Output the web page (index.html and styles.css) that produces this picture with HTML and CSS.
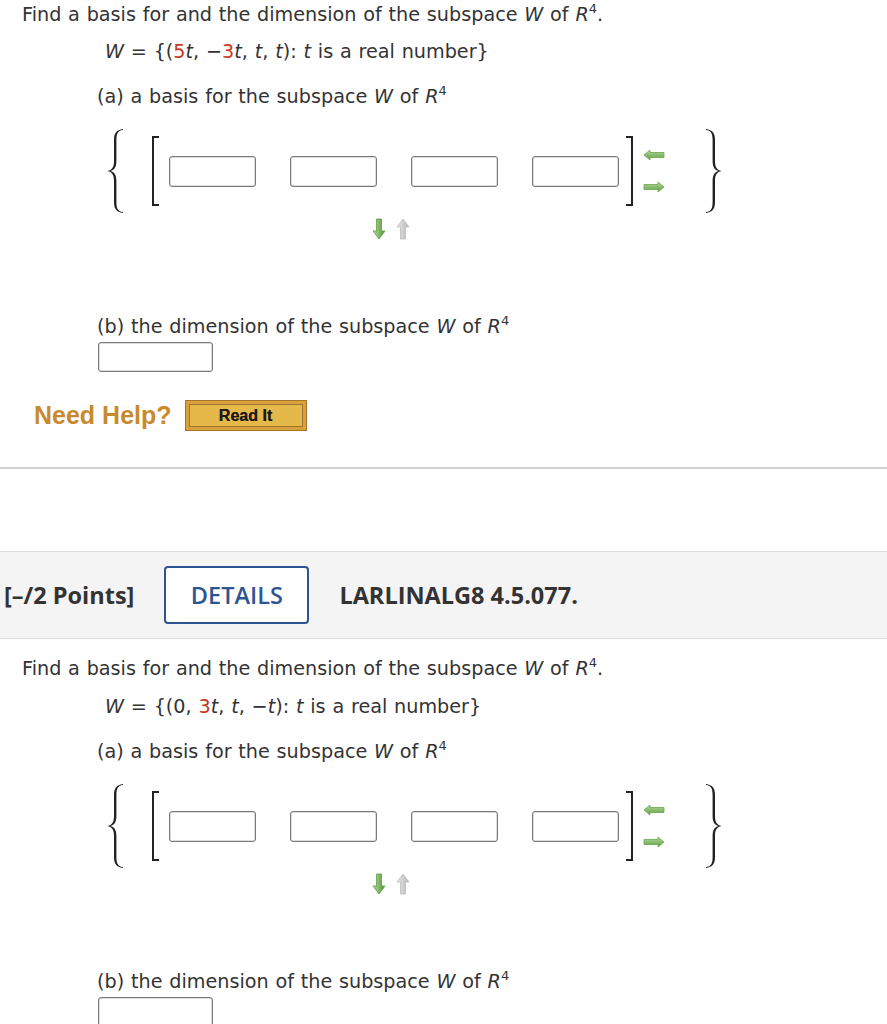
FILE: index.html
```html
<!DOCTYPE html>
<html>
<head>
<meta charset="utf-8">
<link rel="stylesheet" href="styles.css">
</head>
<body>
<section class="q first">
  <p class="prompt">Find a basis for and the dimension of the subspace <i>W</i> of <i>R</i><sup>4</sup>.</p>
  <p class="set"><i>W</i> = {(<span class="red">5</span><i>t</i>, −<span class="red">3</span><i>t</i>, <i>t</i>, <i>t</i>): <i>t</i> is a real number}</p>
  <p class="part">(a) a basis for the subspace <i>W</i> of <i>R</i><sup>4</sup></p>
  <div class="vecrow">
    <svg class="brace" width="20" height="86" viewBox="0 0 20 86"><path d="M17 1 C10.5 2 8 5 8 12 L8 33 C8 39.5 6 42 1.5 43 C6 44 8 46.5 8 53 L8 74 C8 81 10.5 84 17 85 L17 84 C12 83.5 10.4 80.5 10.4 74 L10.4 53 C10.4 47 8.5 44.2 4.5 43 C8.5 41.8 10.4 39 10.4 33 L10.4 12 C10.4 5.5 12 2.5 17 2 Z" fill="#222"/></svg>
    <div class="matrix">
      <span class="bracket left"></span>
      <span class="box"></span>
      <span class="box"></span>
      <span class="box"></span>
      <span class="box"></span>
      <span class="bracket right"></span>
    </div>
    <div class="harrows">
      <svg width="22" height="12" viewBox="0 0 22 12"><defs><linearGradient id="hg1" x1="0" y1="0" x2="0" y2="1"><stop offset="0" stop-color="#b7dba0"/><stop offset="1" stop-color="#5e9f3f"/></linearGradient></defs><path d="M1 6 L7 1 L7 3.5 L21 3.5 L21 8.5 L7 8.5 L7 11 Z" fill="url(#hg1)" stroke="#6aa64c" stroke-width="0.8"/></svg>
      <svg width="22" height="12" viewBox="0 0 22 12"><path d="M21 6 L15 1 L15 3.5 L1 3.5 L1 8.5 L15 8.5 L15 11 Z" fill="url(#hg1)" stroke="#6aa64c" stroke-width="0.8"/></svg>
    </div>
    <svg class="brace rbrace" width="20" height="86" viewBox="0 0 20 86"><path d="M3 1 C9.5 2 12 5 12 12 L12 33 C12 39.5 14 42 18.5 43 C14 44 12 46.5 12 53 L12 74 C12 81 9.5 84 3 85 L3 84 C8 83.5 9.6 80.5 9.6 74 L9.6 53 C9.6 47 11.5 44.2 15.5 43 C11.5 41.8 9.6 39 9.6 33 L9.6 12 C9.6 5.5 8 2.5 3 2 Z" fill="#222"/></svg>
  </div>
  <div class="varrows">
    <svg width="14" height="22" viewBox="0 0 14 22"><defs><linearGradient id="vg1" x1="0" y1="0" x2="1" y2="0"><stop offset="0" stop-color="#b7dba0"/><stop offset="1" stop-color="#4f9232"/></linearGradient><linearGradient id="vg2" x1="0" y1="0" x2="1" y2="0"><stop offset="0" stop-color="#e8e8e8"/><stop offset="1" stop-color="#b5b5b5"/></linearGradient></defs><path d="M4.5 1 L9.5 1 L9.5 13 L13 13 L7 21 L1 13 L4.5 13 Z" fill="url(#vg1)" stroke="#5f9e42" stroke-width="0.8"/></svg>
    <svg width="14" height="22" viewBox="0 0 14 22"><path d="M4.5 21 L9.5 21 L9.5 9 L13 9 L7 1 L1 9 L4.5 9 Z" fill="url(#vg2)" stroke="#bdbdbd" stroke-width="0.8"/></svg>
  </div>
  <p class="part partb">(b) the dimension of the subspace <i>W</i> of <i>R</i><sup>4</sup></p>
  <span class="box dim"></span>
  <div class="help">
    <span class="need">Need Help?</span>
    <span class="readit"><span class="readit-inner">Read It</span></span>
  </div>
</section>
<hr class="rule">
<div class="band">
  <span class="points">[–/2 Points]</span>
  <span class="details">DETAILS</span>
  <span class="code">LARLINALG8 4.5.077.</span>
</div>
<section class="q second">
  <p class="prompt">Find a basis for and the dimension of the subspace <i>W</i> of <i>R</i><sup>4</sup>.</p>
  <p class="set"><i>W</i> = {(0, <span class="red">3</span><i>t</i>, <i>t</i>, −<i>t</i>): <i>t</i> is a real number}</p>
  <p class="part">(a) a basis for the subspace <i>W</i> of <i>R</i><sup>4</sup></p>
  <div class="vecrow">
    <svg class="brace" width="20" height="86" viewBox="0 0 20 86"><path d="M17 1 C10.5 2 8 5 8 12 L8 33 C8 39.5 6 42 1.5 43 C6 44 8 46.5 8 53 L8 74 C8 81 10.5 84 17 85 L17 84 C12 83.5 10.4 80.5 10.4 74 L10.4 53 C10.4 47 8.5 44.2 4.5 43 C8.5 41.8 10.4 39 10.4 33 L10.4 12 C10.4 5.5 12 2.5 17 2 Z" fill="#222"/></svg>
    <div class="matrix">
      <span class="bracket left"></span>
      <span class="box"></span>
      <span class="box"></span>
      <span class="box"></span>
      <span class="box"></span>
      <span class="bracket right"></span>
    </div>
    <div class="harrows">
      <svg width="22" height="12" viewBox="0 0 22 12"><path d="M1 6 L7 1 L7 3.5 L21 3.5 L21 8.5 L7 8.5 L7 11 Z" fill="url(#hg1)" stroke="#6aa64c" stroke-width="0.8"/></svg>
      <svg width="22" height="12" viewBox="0 0 22 12"><path d="M21 6 L15 1 L15 3.5 L1 3.5 L1 8.5 L15 8.5 L15 11 Z" fill="url(#hg1)" stroke="#6aa64c" stroke-width="0.8"/></svg>
    </div>
    <svg class="brace rbrace" width="20" height="86" viewBox="0 0 20 86"><path d="M3 1 C9.5 2 12 5 12 12 L12 33 C12 39.5 14 42 18.5 43 C14 44 12 46.5 12 53 L12 74 C12 81 9.5 84 3 85 L3 84 C8 83.5 9.6 80.5 9.6 74 L9.6 53 C9.6 47 11.5 44.2 15.5 43 C11.5 41.8 9.6 39 9.6 33 L9.6 12 C9.6 5.5 8 2.5 3 2 Z" fill="#222"/></svg>
  </div>
  <div class="varrows">
    <svg width="14" height="22" viewBox="0 0 14 22"><path d="M4.5 1 L9.5 1 L9.5 13 L13 13 L7 21 L1 13 L4.5 13 Z" fill="url(#vg1)" stroke="#5f9e42" stroke-width="0.8"/></svg>
    <svg width="14" height="22" viewBox="0 0 14 22"><path d="M4.5 21 L9.5 21 L9.5 9 L13 9 L7 1 L1 9 L4.5 9 Z" fill="url(#vg2)" stroke="#bdbdbd" stroke-width="0.8"/></svg>
  </div>
  <p class="part partb">(b) the dimension of the subspace <i>W</i> of <i>R</i><sup>4</sup></p>
  <span class="box dim"></span>
</section>
</body>
</html>
```

FILE: styles.css
```css
html, body {
  margin: 0;
  padding: 0;
  background: #fff;
}
body {
  font-family: "DejaVu Sans", Verdana, sans-serif;
  font-size: 19.2px;
  word-spacing: 0.7px;
  color: #333;
  width: 887px;
  overflow: hidden;
}
.q {
  padding-left: 22px;
}
.q.first {
  padding-top: 4px;
}
.q.second {
  padding-top: 19px;
}
.q p {
  margin: 0;
  line-height: 22px;
  white-space: nowrap;
}
.q i {
  font-style: italic;
}
.q sup {
  font-size: 13px;
  line-height: 0;
  vertical-align: 8px;
}
.red {
  color: #c9381b;
}
.set {
  margin-top: 16px !important;
  padding-left: 83px;
}
.part {
  margin-top: 23px !important;
  padding-left: 75px;
}
.first .set {
  margin-top: 15px !important;
}
.vecrow {
  margin-top: 20px;
  margin-left: 84px;
  height: 86px;
  display: flex;
  align-items: center;
}
.brace {
  display: block;
  flex: none;
}
.matrix {
  display: flex;
  align-items: center;
  margin-left: 26px;
}
.bracket {
  display: block;
  width: 5px;
  height: 66px;
  border: 2px solid #222;
  box-sizing: content-box;
}
.bracket.left {
  border-right: none;
  margin-right: 10px;
}
.bracket.right {
  border-left: none;
  margin-left: 7px;
}
.box {
  display: block;
  width: 85px;
  height: 29px;
  border: 1px solid #7a7a7a;
  border-radius: 3px;
  background: #fff;
  box-shadow: inset 0 0 0 0.5px #bbb;
}
.matrix .box + .box {
  margin-left: 34px;
}
.harrows {
  display: flex;
  flex-direction: column;
  gap: 20px;
  margin-left: 10px;
}
.harrows svg {
  display: block;
}
.rbrace {
  margin-left: 38px;
}
.varrows {
  margin-top: 4px;
  margin-left: 350px;
  display: flex;
  gap: 10px;
  height: 22px;
}
.varrows svg {
  display: block;
}
.partb {
  margin-top: 76px !important;
}
.dim {
  margin-top: 4px;
  margin-left: 76px;
  width: 113px;
  height: 28px;
}
.help {
  margin-top: 28px;
  margin-left: 12px;
  display: flex;
  align-items: center;
  gap: 13px;
  height: 31px;
  word-spacing: 0;
}
.need {
  font-family: "Liberation Sans", Arial, sans-serif;
  font-weight: bold;
  font-size: 25px;
  color: #c98a2e;
}
.readit {
  display: block;
  border: 1px solid #a87427;
  background: #d9a03c;
  padding: 3px;
  width: 114px;
  height: 23px;
}
.readit-inner {
  display: flex;
  align-items: center;
  justify-content: center;
  height: 21px;
  border: 1px solid #9d7731;
  font-family: "Liberation Sans", Arial, sans-serif;
  font-weight: bold;
  font-size: 16px;
  color: #1a1a1a;
  background: #e5b84a;
  text-shadow: 0 0 0.6px #3a2a10;
}
.rule {
  margin: 36px 0 0 0;
  border: none;
  border-top: 2px solid #d0d0d0;
  height: 0;
}
.band {
  margin-top: 82px;
  background: #f4f4f4;
  border-top: 1px solid #dcdcdc;
  border-bottom: 1px solid #dcdcdc;
  height: 86px;
  display: flex;
  align-items: center;
  font-family: "Open Sans", sans-serif;
  font-weight: 700;
  font-size: 23.5px;
  word-spacing: 0;
  color: #333;
}
.points {
  margin-left: 4px;
}
.details {
  margin-left: 30px;
  width: 141px;
  height: 54px;
  border: 2px solid #2d5592;
  border-radius: 4px;
  color: #2d5592;
  font-weight: 600;
  display: flex;
  align-items: center;
  justify-content: center;
  background: #fff;
}
.code {
  margin-left: 30px;
}
```
